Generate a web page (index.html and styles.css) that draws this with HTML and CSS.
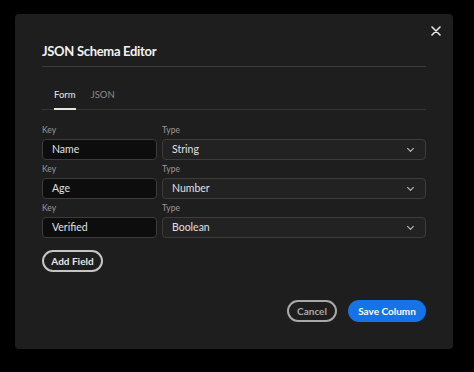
FILE: index.html
```html
<!DOCTYPE html>
<html lang="en">
<head>
  <meta charset="UTF-8">
  <title>JSON Schema Editor</title>
  <link rel="stylesheet" href="styles.css">
</head>
<body>
  <div class="dialog">
    <button class="close-btn" aria-label="Close">
      <svg width="10" height="10" viewBox="0 0 10 10"><path d="M1 1L9 9M9 1L1 9" stroke="#e6e6e6" stroke-width="1.6" stroke-linecap="round"/></svg>
    </button>

    <h1 class="dialog-title">JSON Schema Editor</h1>
    <div class="divider"></div>

    <div class="tabs">
      <div class="tab active">Form</div>
      <div class="tab">JSON</div>
    </div>

    <div class="fields">
      <div class="field-row">
        <div class="field">
          <label class="field-label">Key</label>
          <div class="text-input">Name</div>
        </div>
        <div class="field">
          <label class="field-label">Type</label>
          <div class="select">String <span class="chevron"></span></div>
        </div>
      </div>
      <div class="field-row">
        <div class="field">
          <label class="field-label">Key</label>
          <div class="text-input">Age</div>
        </div>
        <div class="field">
          <label class="field-label">Type</label>
          <div class="select">Number <span class="chevron"></span></div>
        </div>
      </div>
      <div class="field-row">
        <div class="field">
          <label class="field-label">Key</label>
          <div class="text-input">Verified</div>
        </div>
        <div class="field">
          <label class="field-label">Type</label>
          <div class="select">Boolean <span class="chevron"></span></div>
        </div>
      </div>
    </div>

    <button class="btn btn-outline add-field">Add Field</button>

    <div class="footer">
      <button class="btn btn-outline btn-cancel">Cancel</button>
      <button class="btn btn-primary">Save Column</button>
    </div>
  </div>
</body>
</html>
```

FILE: styles.css
```css
body {
  margin: 0;
  padding: 14px 21px 23px 15px;
  background-color: #000;
  font-family: Lato, "Open Sans", Arial, sans-serif;
  color: #e6e6e6;
}

.dialog {
  position: relative;
  width: 438px;
  height: 335px;
  box-sizing: border-box;
  padding: 28px 27px 27px 27px;
  background-color: #1e1e1e;
  border-radius: 4px;
}

.close-btn {
  position: absolute;
  top: 12px;
  right: 12px;
  width: 10px;
  height: 10px;
  padding: 0;
  border: none;
  background: none;
  display: flex;
}

.dialog-title {
  margin: 0;
  font-size: 13px;
  line-height: 18px;
  font-weight: 700;
  letter-spacing: -0.3px;
  color: #f2f2f2;
}

.divider {
  height: 1px;
  margin-top: 6px;
  background-color: #3d3d3d;
}

.tabs {
  display: flex;
  gap: 15px;
  margin-top: 20px;
  padding-left: 12px;
  border-bottom: 1px solid #353535;
}

.tab {
  font-size: 9.5px;
  line-height: 16px;
  padding-bottom: 5px;
  color: #8c8c8c;
  border-bottom: 2px solid transparent;
  margin-bottom: -1px;
}

.tab.active {
  color: #e6e6e6;
  border-bottom-color: #e6e6e6;
}

.fields {
  margin-top: 11px;
}

.field-row {
  display: grid;
  grid-template-columns: 115px 1fr;
  gap: 5px;
}

.field-label {
  display: block;
  font-size: 8.5px;
  line-height: 18px;
  color: #9a9a9a;
}

.text-input,
.select {
  height: 21px;
  box-sizing: border-box;
  border: 1px solid #3c3c3c;
  border-radius: 4px;
  padding: 0 9px;
  font-size: 10.5px;
  line-height: 19px;
  color: #e0e0e0;
}

.text-input {
  background-color: #0d0d0d;
}

.select {
  display: flex;
  justify-content: space-between;
  align-items: center;
  background-color: #222;
}

.chevron {
  width: 4px;
  height: 4px;
  margin-right: 3px;
  margin-top: -3px;
  border-right: 1.5px solid #c8c8c8;
  border-bottom: 1.5px solid #c8c8c8;
  transform: rotate(45deg);
}

.btn {
  height: 22px;
  box-sizing: border-box;
  border-radius: 11px;
  font-family: inherit;
  font-size: 10px;
  font-weight: 700;
  padding: 0 10px;
}

.btn-outline {
  background: none;
  border: 2px solid #c4c4c4;
  color: #e6e6e6;
}

.add-field {
  margin-top: 12px;
  width: 61px;
  padding: 0;
}

.footer {
  display: flex;
  justify-content: flex-end;
  gap: 11px;
  margin-top: 28px;
}

.btn-cancel {
  width: 50px;
  padding: 0;
  border-color: #a8a8a8;
  color: #a8a8a8;
}

.btn-primary {
  width: 78px;
  padding: 0;
  border: none;
  background-color: #1473e6;
  color: #fff;
}
```
